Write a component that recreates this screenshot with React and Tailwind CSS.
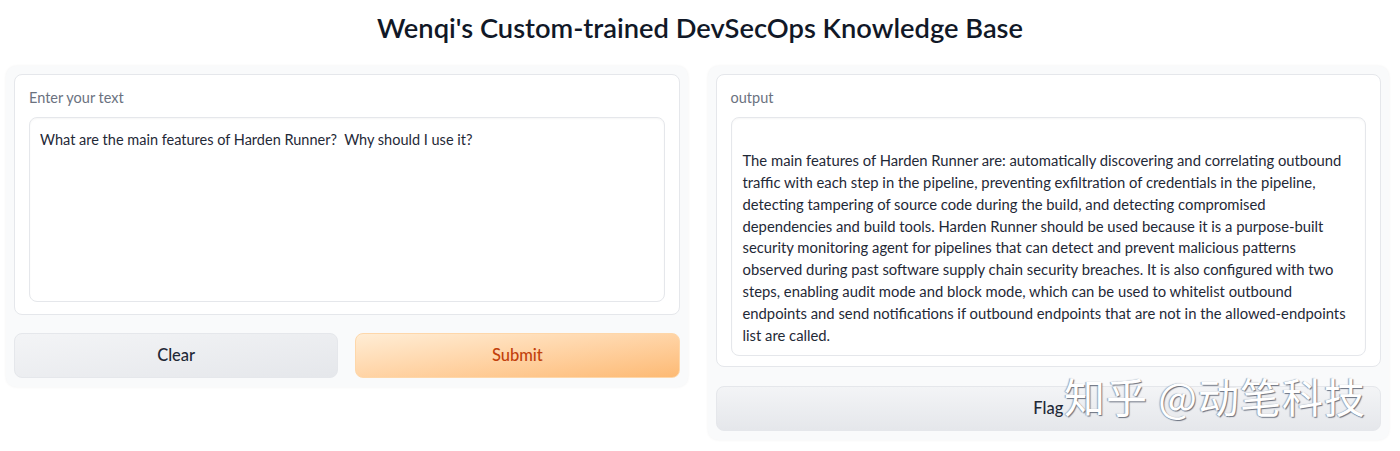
import React from "react";

// line breaks kept as in the reference output box
const answerLines = [
  "The main features of Harden Runner are: automatically discovering and correlating outbound",
  "traffic with each step in the pipeline, preventing exfiltration of credentials in the pipeline,",
  "detecting tampering of source code during the build, and detecting compromised",
  "dependencies and build tools. Harden Runner should be used because it is a purpose-built",
  "security monitoring agent for pipelines that can detect and prevent malicious patterns",
  "observed during past software supply chain security breaches. It is also configured with two",
  "steps, enabling audit mode and block mode, which can be used to whitelist outbound",
  "endpoints and send notifications if outbound endpoints that are not in the allowed-endpoints",
  "list are called.",
];

const font = { fontFamily: '"Source Sans Pro", Lato, "Noto Sans", sans-serif' };

const App = () => {
  return (
    <div
      className="relative w-[1400px] h-[451px] bg-white overflow-hidden text-[#1f2937]"
      style={font}
    >
      {/* title */}
      <h1 className="h-[58px] flex items-center justify-center text-[27.3px] font-semibold text-[#111827] pb-[2px]">
        Wenqi's Custom-trained DevSecOps Knowledge Base
      </h1>

      <div className="flex items-start gap-[20px] pl-[6px] pr-[11px] pt-[8px]">
        {/* left column */}
        <div className="flex-1 bg-[#f9fafb] rounded-[10px] shadow-[0_0_3px_rgba(0,0,0,0.06)] p-[8px] pb-[9px]">
          <div className="bg-white border border-[#e5e7eb] rounded-[8px] px-[14px] pt-[13px] pb-[12px]">
            <div className="text-[14.5px] text-[#6b7280] leading-[20px] mb-[9px]">Enter your text</div>
            <div className="h-[185px] border border-[#e5e7eb] rounded-[8px] shadow-[inset_0_1px_2px_rgba(0,0,0,0.04)] px-[10px] pt-[11px] text-[14.5px] leading-[22px] text-[#1f2937] whitespace-pre">
              {"What are the main features of Harden Runner?  Why should I use it?"}
            </div>
          </div>
          <div className="flex gap-[17px] mt-[18px]">
            <button className="flex-1 h-[45px] rounded-[8px] border border-[#e5e7eb] bg-gradient-to-br from-[#f3f4f6] to-[#e5e7eb] text-[16.5px] font-medium text-[#1f2937]">
              Clear
            </button>
            <button className="flex-1 h-[45px] rounded-[8px] border border-[#fed7aa] bg-gradient-to-br from-[#ffedd5] to-[#fdba74] text-[16.5px] font-medium text-[#c2410c]">
              Submit
            </button>
          </div>
        </div>

        {/* right column */}
        <div className="flex-1 bg-[#f9fafb] rounded-[10px] shadow-[0_0_3px_rgba(0,0,0,0.06)] p-[8px] pb-[9px]">
          <div className="bg-white border border-[#e5e7eb] rounded-[8px] px-[14px] pt-[13px] pb-[10px]">
            <div className="text-[14.5px] text-[#6b7280] leading-[20px] mb-[9px]">output</div>
            <div className="h-[239px] border border-[#e5e7eb] rounded-[8px] shadow-[inset_0_1px_2px_rgba(0,0,0,0.04)] pl-[11px] pr-[4px] pt-[32px] text-[14.8px] leading-[21.85px] text-[#1f2937] whitespace-nowrap">
              {answerLines.map((line) => (
                <div key={line}>{line}</div>
              ))}
            </div>
          </div>
          <button className="w-full h-[45px] mt-[19px] rounded-[8px] border border-[#e5e7eb] bg-gradient-to-b from-[#f3f4f6] to-[#e5e7eb] text-[16.5px] font-medium text-[#1f2937]">
            Flag
          </button>
        </div>
      </div>

      {/* watermark */}
      <div
        className="absolute left-[1064px] top-[369px] text-[41px] leading-[52px] text-white tracking-[1px] [text-shadow:1px_1px_1px_#6b7280,-1px_0_1px_#9ca3af]"
        style={{ fontFamily: '"Noto Sans CJK SC", sans-serif' }}
      >
        知乎 @动笔科技
      </div>
    </div>
  );
};

export default App;
